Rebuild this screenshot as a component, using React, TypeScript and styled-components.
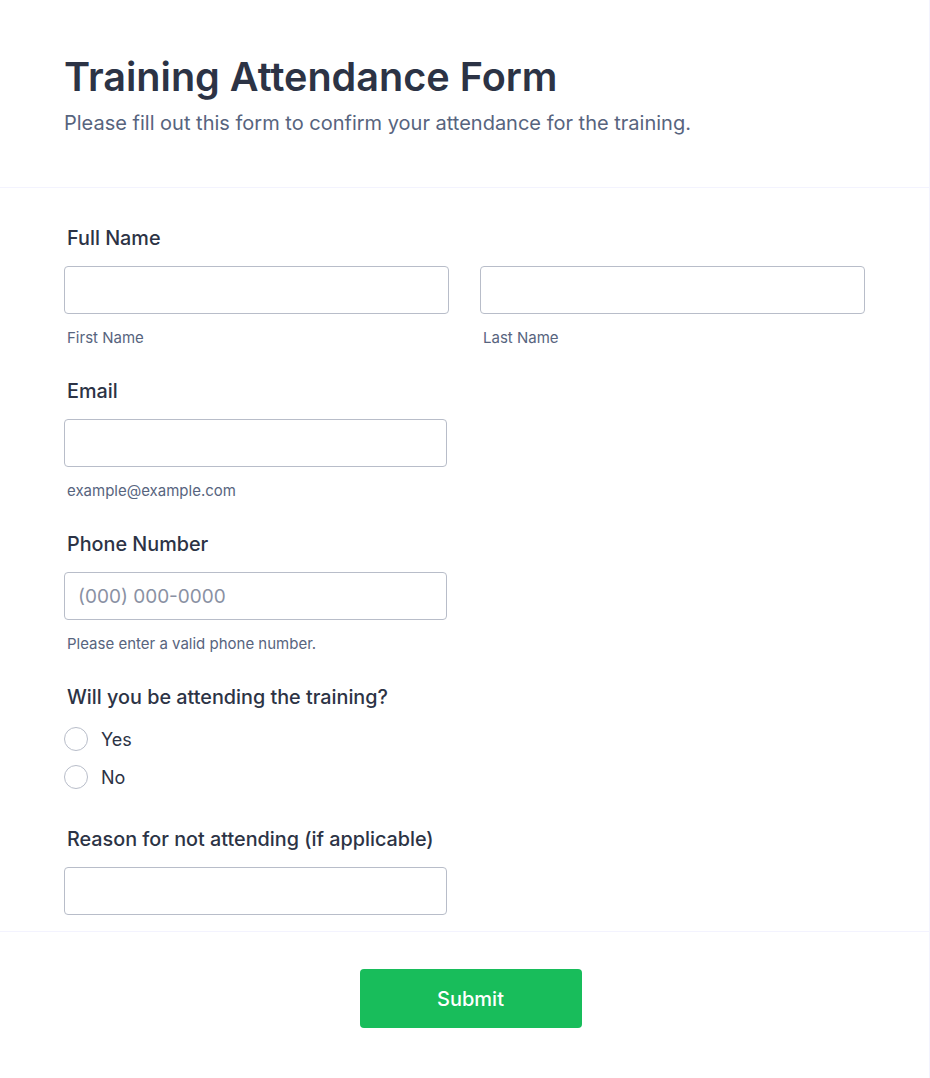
import React, { useState } from "react";
import styled, { createGlobalStyle } from "styled-components";

const GlobalStyle = createGlobalStyle`
  * {
    box-sizing: border-box;
  }
  body {
    margin: 0;
    background: #ffffff;
    font-family: Inter, "Noto Sans", "Liberation Sans", sans-serif;
    color: #2c3345;
  }
`;

const Card = styled.div`
  width: 930px;
  background: #ffffff;
  border-right: 1px solid #f3f3fe;
`;

const Header = styled.header`
  padding: 53px 64px 50px;
  border-bottom: 1px solid #f3f3fe;
`;

const Title = styled.h1`
  margin: 0 0 8px;
  font-size: 39.6px;
  line-height: 48px;
  font-weight: 600;
  color: #2c3345;
`;

const Subtitle = styled.p`
  margin: 0;
  font-size: 20px;
  line-height: 28px;
  font-weight: 400;
  color: #57647e;
`;

const FormBody = styled.div`
  padding: 36px 64px 16px;
  display: flex;
  flex-direction: column;
  gap: 29px;
  border-bottom: 1px solid #f3f3fe;
`;

const Field = styled.div<{ $spaced?: boolean }>`
  display: flex;
  flex-direction: column;
  margin-top: ${(p) => (p.$spaced ? "5px" : "0")};
`;

const Label = styled.label`
  padding-left: 3px;
  font-size: 19.8px;
  line-height: 28px;
  font-weight: 500;
  color: #2c3345;
  margin-bottom: 14px;
`;

const Row = styled.div`
  display: flex;
  gap: 31px;
`;

const Column = styled.div<{ $width: number }>`
  display: flex;
  flex-direction: column;
  width: ${(p) => p.$width}px;
`;

const Input = styled.input`
  width: 100%;
  height: 48px;
  border: 1px solid #b8bdc9;
  border-radius: 4px;
  padding: 0 13px;
  font-family: inherit;
  font-size: 19px;
  color: #2c3345;
  background: #ffffff;
  outline: none;

  &::placeholder {
    color: #8a91a3;
  }
`;

const SubLabel = styled.span`
  padding-left: 3px;
  margin-top: 14px;
  font-size: 15px;
  line-height: 20px;
  color: #57647e;
`;

const RadioList = styled.div`
  display: flex;
  flex-direction: column;
  gap: 10px;
`;

const RadioOption = styled.label`
  display: flex;
  align-items: center;
  gap: 13px;
  height: 28px;
  font-size: 18px;
  color: #2c3345;
  cursor: pointer;
`;

const RadioCircle = styled.span<{ $checked: boolean }>`
  width: 24px;
  height: 24px;
  border-radius: 50%;
  border: 1px solid #b8bdc9;
  background: #ffffff;
  display: flex;
  align-items: center;
  justify-content: center;

  &::after {
    content: "";
    width: 12px;
    height: 12px;
    border-radius: 50%;
    background: ${(p) => (p.$checked ? "#2e69ff" : "transparent")};
  }
`;

const HiddenRadio = styled.input`
  display: none;
`;

const Footer = styled.div`
  display: flex;
  justify-content: center;
  padding: 37px 0 50px 12px;
`;

const SubmitButton = styled.button`
  width: 222px;
  height: 59px;
  border: none;
  border-radius: 4px;
  background: #18bd5b;
  color: #ffffff;
  font-family: inherit;
  font-size: 20px;
  font-weight: 500;
  cursor: pointer;
`;

const App: React.FC = () => {
  const [attending, setAttending] = useState("");

  return (
    <>
      <GlobalStyle />
      <Card>
        <Header>
          <Title>Training Attendance Form</Title>
          <Subtitle>
            Please fill out this form to confirm your attendance for the training.
          </Subtitle>
        </Header>
        <FormBody>
          <Field>
            <Label>Full Name</Label>
            <Row>
              <Column $width={385}>
                <Input type="text" />
                <SubLabel>First Name</SubLabel>
              </Column>
              <Column $width={385}>
                <Input type="text" />
                <SubLabel>Last Name</SubLabel>
              </Column>
            </Row>
          </Field>
          <Field>
            <Label>Email</Label>
            <Column $width={383}>
              <Input type="email" />
              <SubLabel>example@example.com</SubLabel>
            </Column>
          </Field>
          <Field>
            <Label>Phone Number</Label>
            <Column $width={383}>
              <Input type="tel" placeholder="(000) 000-0000" />
              <SubLabel>Please enter a valid phone number.</SubLabel>
            </Column>
          </Field>
          <Field>
            <Label>Will you be attending the training?</Label>
            <RadioList>
              {["Yes", "No"].map((opt) => (
                <RadioOption key={opt}>
                  <HiddenRadio
                    type="radio"
                    name="attending"
                    value={opt}
                    checked={attending === opt}
                    onChange={(e) => setAttending(e.target.value)}
                  />
                  <RadioCircle $checked={attending === opt} />
                  {opt}
                </RadioOption>
              ))}
            </RadioList>
          </Field>
          <Field $spaced>
            <Label>Reason for not attending (if applicable)</Label>
            <Column $width={383}>
              <Input type="text" />
            </Column>
          </Field>
        </FormBody>
        <Footer>
          <SubmitButton>Submit</SubmitButton>
        </Footer>
      </Card>
    </>
  );
};

export default App;
